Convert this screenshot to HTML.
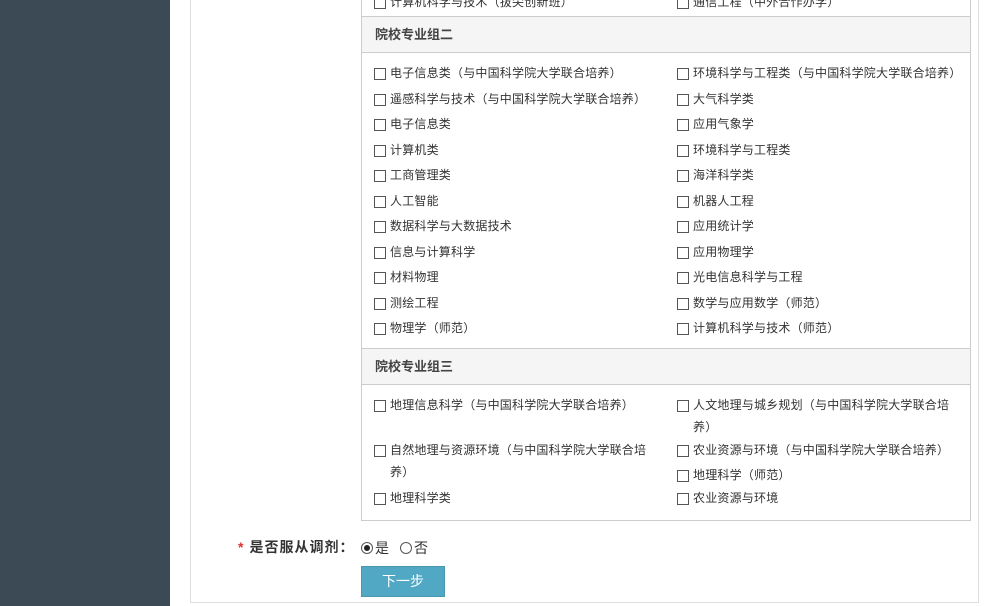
<!DOCTYPE html>
<html><head><meta charset="utf-8"><style>
*{margin:0;padding:0;box-sizing:border-box}
body{width:995px;height:606px;overflow:hidden;background:#fff;font-family:"Liberation Sans","Noto Sans CJK SC",sans-serif;font-size:12px;color:#333;position:relative}
.side{position:absolute;left:0;top:0;width:170px;height:606px;background:#3b4a54}
.panel{position:absolute;left:190px;top:-2px;width:789px;height:605px;border-left:1px solid #ddd;border-right:1px solid #ddd;border-bottom:1px solid #ddd}
.tbl{position:absolute;left:361px;top:-10px;width:610px;border:1px solid #ccc;border-top:none}
.hd{height:37px;line-height:36px;background:#f5f5f5;border-top:1px solid #ccc;border-bottom:1px solid #ccc;padding-left:13px;font-weight:bold;color:#444;font-size:13px}
.body{padding:8px 0 6px 12px;position:relative}
.row{display:flex;min-height:25.5px}
.c{width:303px;display:flex;align-items:flex-start;line-height:22px;padding-top:1px;letter-spacing:0.2px;padding-right:20px}
.c+.c{width:290px;padding-right:0}
.cb{width:12px;height:12px;border:1px solid #555;margin:6px 4px 0 0;flex:none;background:#fff}
.lab{position:absolute;left:238px;top:537px;font-weight:bold;font-size:14px;color:#333;letter-spacing:1px}
.lab span{color:#d33;margin-right:5px}
.r{position:absolute;top:538px;font-size:14px}
.btn{position:absolute;left:361px;top:566px;width:84px;height:31px;background:#50a8c4;border:1px solid #4a98b0;color:#fff;font-size:14px;text-align:center;line-height:29px}
.rad{display:inline-block;width:12px;height:12px;border:1px solid #555;border-radius:50%;vertical-align:-1px;margin-right:2px;position:relative}
.rad.on::after{content:"";position:absolute;left:2px;top:2px;width:6px;height:6px;border-radius:50%;background:#222}
</style></head><body>
<div class="side"></div>
<div class="panel"></div>
<div class="tbl">
 <div class="body" style="padding-top:0;height:26px"><div class="row"><div class="c"><i class="cb"></i>计算机科学与技术（拔尖创新班）</div><div class="c"><i class="cb"></i>通信工程（中外合作办学）</div></div></div>
 <div class="hd">院校专业组二</div>
 <div class="body">
  <div class="row"><div class="c"><i class="cb"></i>电子信息类（与中国科学院大学联合培养）</div><div class="c"><i class="cb"></i>环境科学与工程类（与中国科学院大学联合培养）</div></div>
  <div class="row"><div class="c"><i class="cb"></i>遥感科学与技术（与中国科学院大学联合培养）</div><div class="c"><i class="cb"></i>大气科学类</div></div>
  <div class="row"><div class="c"><i class="cb"></i>电子信息类</div><div class="c"><i class="cb"></i>应用气象学</div></div>
  <div class="row"><div class="c"><i class="cb"></i>计算机类</div><div class="c"><i class="cb"></i>环境科学与工程类</div></div>
  <div class="row"><div class="c"><i class="cb"></i>工商管理类</div><div class="c"><i class="cb"></i>海洋科学类</div></div>
  <div class="row"><div class="c"><i class="cb"></i>人工智能</div><div class="c"><i class="cb"></i>机器人工程</div></div>
  <div class="row"><div class="c"><i class="cb"></i>数据科学与大数据技术</div><div class="c"><i class="cb"></i>应用统计学</div></div>
  <div class="row"><div class="c"><i class="cb"></i>信息与计算科学</div><div class="c"><i class="cb"></i>应用物理学</div></div>
  <div class="row"><div class="c"><i class="cb"></i>材料物理</div><div class="c"><i class="cb"></i>光电信息科学与工程</div></div>
  <div class="row"><div class="c"><i class="cb"></i>测绘工程</div><div class="c"><i class="cb"></i>数学与应用数学（师范）</div></div>
  <div class="row"><div class="c"><i class="cb"></i>物理学（师范）</div><div class="c"><i class="cb"></i>计算机科学与技术（师范）</div></div>
 </div>
 <div class="hd">院校专业组三</div>
 <div class="body" style="padding-bottom:9px">
  <div class="row"><div class="c"><i class="cb"></i>地理信息科学（与中国科学院大学联合培养）</div><div class="c"><i class="cb"></i>人文地理与城乡规划（与中国科学院大学联合培养）</div></div>
  <div class="row"><div class="c"><i class="cb"></i>自然地理与资源环境（与中国科学院大学联合培养）</div><div class="c" style="flex-direction:column"><div style="display:flex"><i class="cb"></i>农业资源与环境（与中国科学院大学联合培养）</div><div style="display:flex;margin-top:3px"><i class="cb"></i>地理科学（师范）</div></div></div>
  <div class="row"><div class="c"><i class="cb"></i>地理科学类</div><div class="c"><i class="cb"></i>农业资源与环境</div></div>
 </div>
</div>
<div class="lab"><span>*</span>是否服从调剂：</div>
<div class="r" style="left:361px"><i class="rad on"></i>是</div>
<div class="r" style="left:400px"><i class="rad"></i>否</div>
<div class="btn">下一步</div>
</body></html>
